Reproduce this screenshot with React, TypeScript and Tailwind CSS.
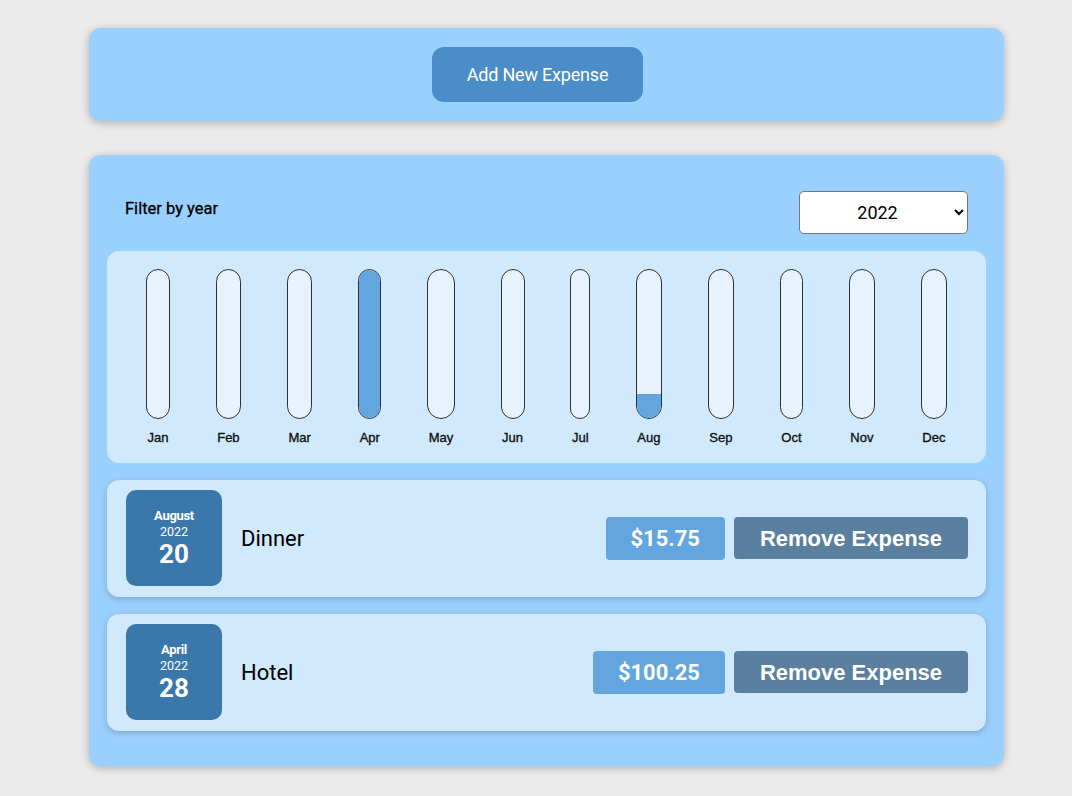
import type { FC } from "react";

const months = [
  { label: "Jan", fill: 0 },
  { label: "Feb", fill: 0 },
  { label: "Mar", fill: 0 },
  { label: "Apr", fill: 100 },
  { label: "May", fill: 0 },
  { label: "Jun", fill: 0 },
  { label: "Jul", fill: 0 },
  { label: "Aug", fill: 16 },
  { label: "Sep", fill: 0 },
  { label: "Oct", fill: 0 },
  { label: "Nov", fill: 0 },
  { label: "Dec", fill: 0 },
];

const expenses = [
  { month: "August", year: "2022", day: "20", title: "Dinner", amount: "$15.75" },
  { month: "April", year: "2022", day: "28", title: "Hotel", amount: "$100.25" },
];

const ChartBar: FC<{ label: string; fill: number }> = ({ label, fill }) => (
  <div className="flex flex-col items-center">
    <div className="h-[150px] w-full border border-[#313131] rounded-full bg-[#e6f3fd] overflow-hidden flex flex-col justify-end">
      <div className="bg-[#62a5df] w-full" style={{ height: `${fill}%` }} />
    </div>
    <span
      className="mt-[12px] px-[1.5px] text-[13px] font-normal text-[#111] leading-none [-webkit-text-stroke:0.35px_#111]"
      style={{ fontFamily: '"Liberation Sans", Arial, sans-serif' }}
    >
      {label}
    </span>
  </div>
);

const ExpenseItem: FC<(typeof expenses)[number]> = ({ month, year, day, title, amount }) => (
  <div className="flex items-center bg-[#d0e9fc] rounded-xl shadow-[0_2px_6px_rgba(0,0,0,0.2)] pl-[19px] pr-[18px] pt-[10px] pb-[11px]">
    <div className="w-[96px] h-[96px] rounded-[10px] bg-[#3a78ac] text-white flex flex-col items-center justify-center">
      <span className="text-[13px] font-bold leading-[16px] tracking-tight">{month}</span>
      <span className="text-[12.5px] leading-[16px]">{year}</span>
      <span className="text-[26px] font-bold leading-[28px]">{day}</span>
    </div>
    <h2 className="ml-[19px] flex-1 text-[22px] font-normal text-black">{title}</h2>
    <div className="h-[43px] px-[25px] rounded bg-[#62a5df] text-white text-[22px] font-bold flex items-center justify-center">
      {amount}
    </div>
    <button
      className="ml-[9px] h-[42px] w-[234px] rounded bg-[#5b7f9e] text-white text-[22px] font-bold"
      style={{ fontFamily: '"Liberation Sans", Arial, sans-serif' }}
    >
      Remove Expense
    </button>
  </div>
);

export default function App() {
  return (
    <div className="min-h-[796px] bg-[#ebebeb] pt-[28px] pb-[30px]" style={{ fontFamily: 'Roboto, "Liberation Sans", sans-serif' }}>
      <div className="w-[915px] ml-[89px] h-[93px] bg-[#9ad0fd] rounded-xl shadow-[0_2px_8px_rgba(0,0,0,0.25)] flex items-center justify-center">
        <button className="w-[211px] h-[55px] -mt-[1px] mr-[18px] rounded-xl bg-[#4a8dc8] text-white text-[18px] tracking-[-0.2px]">
          Add New Expense
        </button>
      </div>

      <div className="w-[915px] ml-[89px] mt-[34px] bg-[#9ad0fd] rounded-xl shadow-[0_2px_8px_rgba(0,0,0,0.25)] px-[18px] pt-[36px] pb-[35px]">
        <div className="flex items-center justify-between pl-[18px] pr-[18px]">
          <span className="text-[16.5px] font-normal text-black -mt-[7px] [-webkit-text-stroke:0.3px_black]">Filter by year</span>
          <select
            defaultValue="2022"
            className="w-[169px] h-[43px] bg-white border border-[#767676] rounded-[5px] text-[18px] font-normal text-center px-2"
          >
            <option value="2022">2022</option>
            <option value="2021">2021</option>
            <option value="2020">2020</option>
          </select>
        </div>

        <div className="mt-[17px] h-[212px] bg-[#d0e9fc] rounded-xl flex justify-around px-4 pt-[18px]">
          {months.map((m) => (
            <ChartBar key={m.label} label={m.label} fill={m.fill} />
          ))}
        </div>

        <div className="mt-[17px] flex flex-col gap-[17px]">
          {expenses.map((e) => (
            <ExpenseItem key={e.title} {...e} />
          ))}
        </div>
      </div>
    </div>
  );
}
